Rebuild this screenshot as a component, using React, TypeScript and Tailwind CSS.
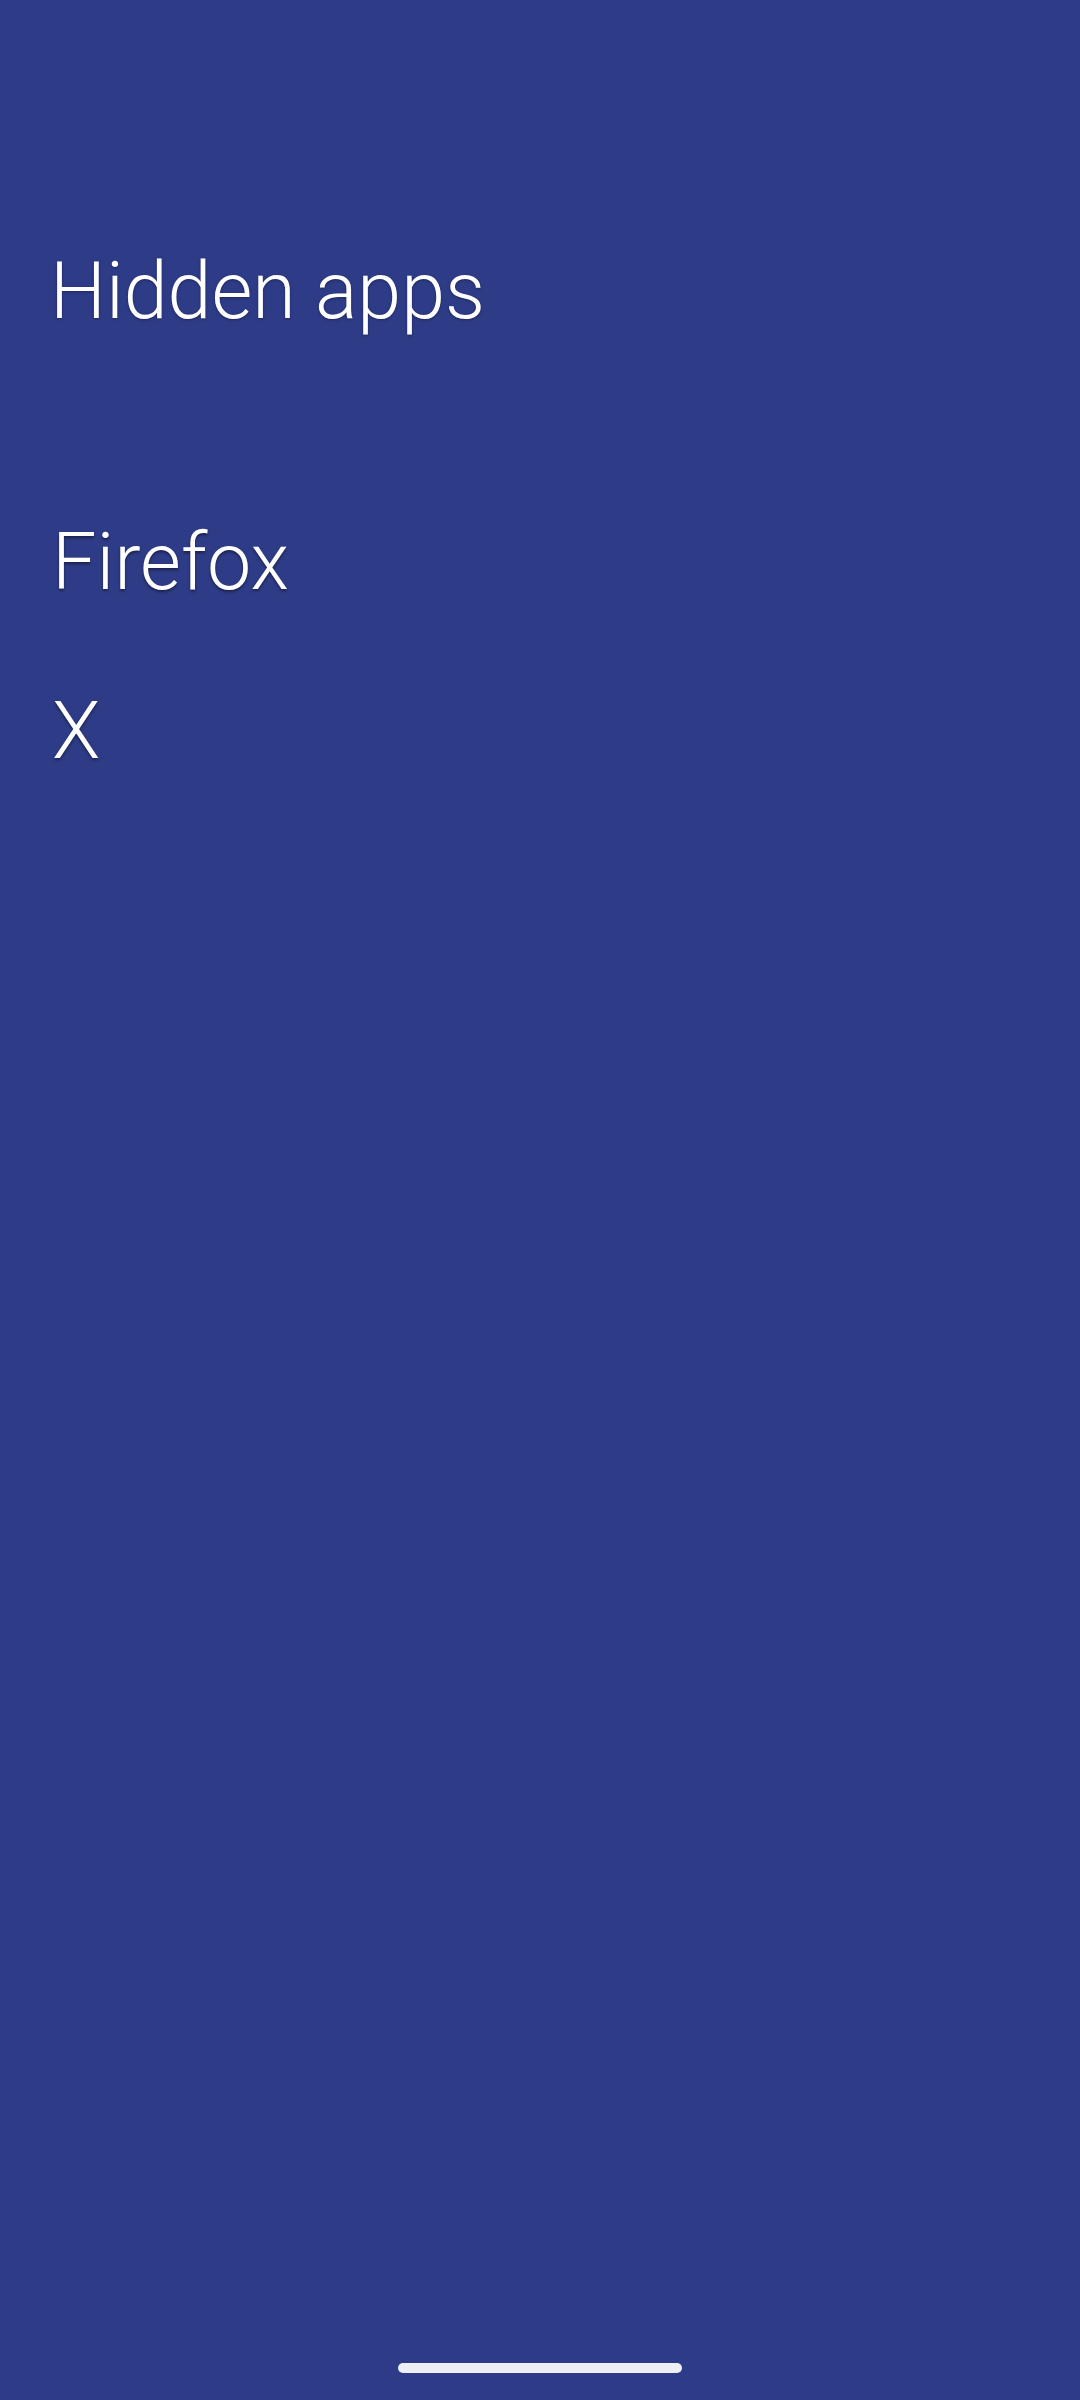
const APPS = ["Firefox", "X"];

export default function App() {
  return (
    <div className="flex min-h-[2400px] w-full flex-col bg-[#2e3c88] font-['Roboto',sans-serif] text-white">
      <h1 className="pl-[50px] pt-[252px] text-[79px] font-light leading-none [text-shadow:0_1px_3px_rgba(0,0,0,0.35)]">
        Hidden apps
      </h1>

      <ul className="mt-[192px] flex flex-col gap-[90px] pl-[52px]">
        {APPS.map((name) => (
          <li
            key={name}
            className="text-[79px] font-light leading-none [text-shadow:0_2px_3px_rgba(0,0,0,0.45)]"
          >
            {name}
          </li>
        ))}
      </ul>

      <div className="flex-1" />
      <div className="mx-auto mb-[27px] h-[10px] w-[284px] rounded-full bg-[#eff0f6]" />
    </div>
  );
}
